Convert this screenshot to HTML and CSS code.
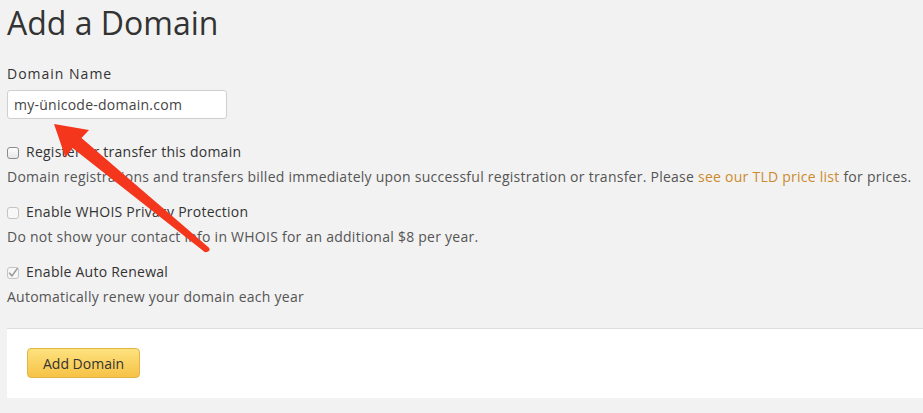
FILE: index.html
```html
<!DOCTYPE html>
<html>
<head>
<meta charset="utf-8">
<link rel="stylesheet" href="styles.css">
</head>
<body>
<div class="page">
  <h1 class="title">Add a Domain</h1>
  <div class="field">
    <label class="field-label">Domain Name</label>
    <div class="input">my-ünicode-domain.com</div>
  </div>

  <div class="option">
    <div class="check-row">
      <svg class="cb" width="12" height="12" viewBox="0 0 12 12"><defs><linearGradient id="g1" x1="0" y1="0" x2="0" y2="1"><stop offset="0" stop-color="#ffffff"/><stop offset="1" stop-color="#e6e6e6"/></linearGradient></defs><rect x="0.5" y="0.5" width="11" height="11" rx="2.5" fill="url(#g1)" stroke="#8c8c8c"/></svg>
      <span>Register or transfer this domain</span>
    </div>
    <p class="help">Domain registrations and transfers billed immediately upon successful registration or transfer. Please <a class="link">see our TLD price list</a> for prices.</p>
  </div>

  <div class="option">
    <div class="check-row">
      <svg class="cb" width="12" height="12" viewBox="0 0 12 12"><rect x="0.5" y="0.5" width="11" height="11" rx="2.5" fill="#f7f7f7" stroke="#c4c4c4"/></svg>
      <span>Enable WHOIS Privacy Protection</span>
    </div>
    <p class="help">Do not show your contact info in WHOIS for an additional $8 per year.</p>
  </div>

  <div class="option">
    <div class="check-row">
      <svg class="cb" width="12" height="12" viewBox="0 0 12 12"><rect x="0.5" y="0.5" width="11" height="11" rx="2.5" fill="#f7f7f7" stroke="#c4c4c4"/><path d="M2.6 6.2 L5 8.9 L10.2 1.6" fill="none" stroke="#9a9a9a" stroke-width="1.6" stroke-linecap="round" stroke-linejoin="round"/></svg>
      <span>Enable Auto Renewal</span>
    </div>
    <p class="help">Automatically renew your domain each year</p>
  </div>

  <div class="footer">
    <button class="btn">Add Domain</button>
  </div>
</div>

<svg class="arrow" width="923" height="413" viewBox="0 0 923 413">
  <path d="M54 124 L89 130 L81.5 138 L209 247.7 Q211.5 251.5 205 252.3 L72.5 148 L65.5 157.5 Z" fill="#f4361d"/>
</svg>
</body>
</html>
```
FILE: styles.css
```css
html, body {
  margin: 0;
  padding: 0;
}
body {
  background: #f2f2f2;
  font-family: "Open Sans", "Liberation Sans", sans-serif;
  color: #444;
  font-size: 14px;
  line-height: 20px;
  letter-spacing: 0.25px;
  position: relative;
  overflow: hidden;
}
.page {
  padding: 3px 0 0 7px;
}
.title {
  margin: 0;
  font-size: 32px;
  line-height: 40px;
  font-weight: 400;
  letter-spacing: 0;
  color: #333;
}
.field {
  margin-top: 21px;
}
.field-label {
  display: block;
  letter-spacing: 1px;
  color: #333;
  line-height: 20px;
}
.input {
  margin-top: 6px;
  box-sizing: border-box;
  width: 220px;
  height: 29px;
  background: #fff;
  border: 1px solid #cfcfcf;
  border-radius: 3px;
  padding: 0 0 0 6px;
  line-height: 27px;
  color: #444;
}
.option {
  margin-top: 23px;
}
.option + .option {
  margin-top: 15px;
}
.check-row {
  display: flex;
  align-items: center;
  gap: 7px;
  color: #333;
}
.cb {
  flex: none;
  margin-top: 2px;
}
.help {
  margin: 5px 0 0 0;
  color: #555;
}
.link {
  color: #cc8a2c;
}
.footer {
  margin-top: 21px;
  background: #fff;
  border-top: 1px solid #dedede;
  padding: 19px 20px 20px 20px;
}
.btn {
  display: block;
  box-sizing: border-box;
  height: 30px;
  width: 113px;
  padding: 0;
  font-family: "Open Sans", "Liberation Sans", sans-serif;
  font-size: 14px;
  letter-spacing: 0;
  color: #333;
  background: linear-gradient(#fee27f, #f6c246);
  border: 1px solid #e2b443;
  border-radius: 4px;
}
.arrow {
  position: absolute;
  left: 0;
  top: 0;
  pointer-events: none;
}
```
